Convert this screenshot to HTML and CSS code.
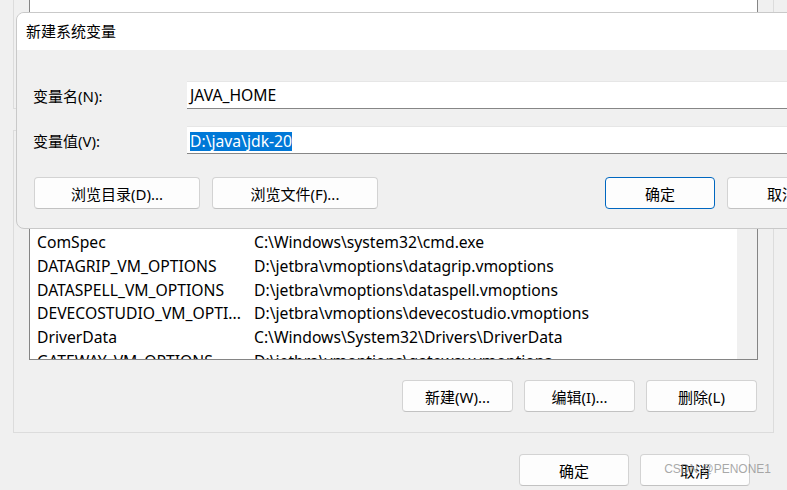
FILE: index.html
```html
<!DOCTYPE html>
<html lang="zh-CN">
<head>
    <meta charset="UTF-8">
    <meta name="viewport" content="width=device-width, initial-scale=1.0">
    <title>新建系统变量</title>
    <link rel="stylesheet" href="styles.css">
</head>
<body>
    <div class="window">
        <div class="group group-user">
            <div class="list list-user"></div>
        </div>

        <div class="group group-system">
            <div class="list list-system">
                <div class="rows">
                    <div class="row"><span class="name">ComSpec</span><span class="value">C:\Windows\system32\cmd.exe</span></div>
                    <div class="row"><span class="name">DATAGRIP_VM_OPTIONS</span><span class="value">D:\jetbra\vmoptions\datagrip.vmoptions</span></div>
                    <div class="row"><span class="name">DATASPELL_VM_OPTIONS</span><span class="value">D:\jetbra\vmoptions\dataspell.vmoptions</span></div>
                    <div class="row"><span class="name">DEVECOSTUDIO_VM_OPTI...</span><span class="value">D:\jetbra\vmoptions\devecostudio.vmoptions</span></div>
                    <div class="row"><span class="name">DriverData</span><span class="value">C:\Windows\System32\Drivers\DriverData</span></div>
                    <div class="row"><span class="name">GATEWAY_VM_OPTIONS</span><span class="value">D:\jetbra\vmoptions\gateway.vmoptions</span></div>
                </div>
                <div class="scroll-track"></div>
            </div>
            <div class="actions">
                <button class="btn btn-action">新建(W)...</button>
                <button class="btn btn-action">编辑(I)...</button>
                <button class="btn btn-action">删除(L)</button>
            </div>
        </div>

        <div class="footer">
            <button class="btn">确定</button>
            <button class="btn">取消</button>
        </div>
    </div>

    <div class="dialog">
        <div class="dialog-title">新建系统变量</div>
        <div class="dialog-body">
            <div class="form">
                <label class="field-label">变量名(N):</label>
                <div class="field">JAVA_HOME</div>
                <label class="field-label">变量值(V):</label>
                <div class="field"><span class="selected">D:\java\jdk-20</span></div>
            </div>
            <div class="dialog-buttons">
                <button class="btn btn-wide">浏览目录(D)...</button>
                <button class="btn btn-wide">浏览文件(F)...</button>
                <button class="btn btn-primary">确定</button>
                <button class="btn">取消</button>
            </div>
        </div>
    </div>

    <div class="watermark">CSDN @PENONE1</div>
</body>
</html>
```

FILE: styles.css
```css
body {
    margin: 0;
    height: 490px;
    overflow: hidden;
    position: relative;
    background-color: #f0f0f0;
    font-family: 'Noto Sans', 'Noto Sans CJK SC', sans-serif;
    font-size: 15px;
    line-height: 20px;
    color: #000;
}

.window {
    width: 761px;
    margin-left: 13px;
}

.group {
    box-sizing: border-box;
    border: 1px solid #dcdcdc;
}

.group-user {
    height: 109px;
    border-top: none;
}

.group-system {
    height: 303px;
    margin-top: 21px;
    padding-top: 19px;
}

.list {
    box-sizing: border-box;
    width: 729px;
    margin-left: 15px;
    background: #fff;
    border: 1px solid #858585;
}

.list-user {
    height: 80px;
    border-top: none;
}

.list-system {
    height: 210px;
    display: flex;
    overflow: hidden;
}

.rows {
    flex: 1;
    padding-top: 80px;
}

.row {
    display: flex;
    height: 23.8px;
    line-height: 23.8px;
    padding-left: 7px;
    font-size: 15.7px;
    white-space: nowrap;
}

.name {
    width: 217px;
    flex-shrink: 0;
}

.scroll-track {
    width: 20px;
    background: #f0f0f0;
}

.actions {
    display: flex;
    justify-content: flex-end;
    gap: 11px;
    margin-top: 20px;
    padding-right: 16px;
}

.footer {
    display: flex;
    justify-content: flex-end;
    gap: 11px;
    margin-top: 21px;
    padding-right: 24px;
}

.btn {
    box-sizing: border-box;
    width: 110px;
    height: 32px;
    padding: 0;
    background: #fdfdfd;
    border: 1px solid #d3d3d3;
    border-bottom-color: #c2c2c2;
    border-radius: 4px;
    font-family: inherit;
    font-size: 15px;
    color: #000;
}

.btn-action {
    width: 111px;
}

.btn-wide {
    width: 166px;
}

.btn-primary {
    border-color: #0067c0;
    margin-left: 215px;
}

/* dialog on top of the env window */
.dialog {
    position: absolute;
    left: 16px;
    top: 12px;
    width: 840px;
    height: 217px;
    box-sizing: border-box;
    border: 1px solid #c9c9c9;
    border-radius: 8px;
    overflow: hidden;
    background: #f0f0f0;
}

.dialog-title {
    height: 37px;
    line-height: 37px;
    padding-left: 9px;
    background: #fff;
}

.dialog-body {
    padding: 31px 0 0 16px;
}

.form {
    display: grid;
    grid-template-columns: 154px 700px;
    grid-auto-rows: 28px;
    row-gap: 17px;
}

.field-label {
    line-height: 30px;
}

.field {
    box-sizing: border-box;
    height: 28px;
    padding-left: 3px;
    line-height: 26px;
    font-size: 15.7px;
    background: #fff;
    border: 1px solid #e6e6e6;
    border-bottom-color: #868686;
    border-left: none;
}

.selected {
    background: #0078d7;
    color: #fff;
    display: inline-block;
    line-height: 19px;
    vertical-align: middle;
}

.dialog-buttons {
    display: flex;
    gap: 12px;
    margin-top: 23px;
    margin-left: 1px;
}

.watermark {
    position: absolute;
    right: 16px;
    bottom: 11px;
    font-family: 'Liberation Sans', Arial, sans-serif;
    font-size: 12px;
    color: rgba(140, 140, 140, 0.75);
}
```
